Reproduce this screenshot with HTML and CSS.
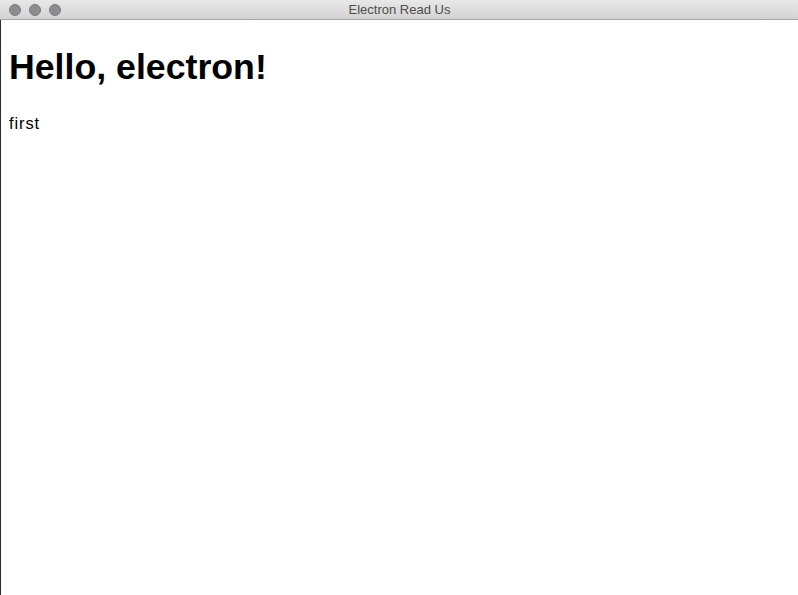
FILE: index.html
```html
<!DOCTYPE html>
<html lang="en">
<head>
<meta charset="utf-8">
<title>Electron Read Us</title>
<link rel="stylesheet" href="styles.css">
</head>
<body>
  <div class="window">
    <div class="titlebar">
      <div class="lights">
        <span class="light"></span>
        <span class="light"></span>
        <span class="light"></span>
      </div>
      <div class="title">Electron Read Us</div>
    </div>
    <div class="content">
      <h1 class="heading">Hello, electron!</h1>
      <p class="text">first</p>
    </div>
  </div>
</body>
</html>
```

FILE: styles.css
```css
html, body {
  margin: 0;
  padding: 0;
  height: 100%;
  background: #ffffff;
}

.window {
  display: flex;
  flex-direction: column;
  height: 100%;
  box-sizing: border-box;
  font-family: "Liberation Sans", Arial, sans-serif;
}

.titlebar {
  position: relative;
  flex: 0 0 19px;
  display: flex;
  align-items: center;
  background: linear-gradient(#e8e8e8, #d3d3d3);
  border-bottom: 1px solid #a9a9a9;
}

.lights {
  display: flex;
  gap: 8px;
  padding-left: 9px;
}

.light {
  width: 12px;
  height: 12px;
  border-radius: 50%;
  background: #8d8c8f;
  box-sizing: border-box;
  border: 1px solid #7b7a7d;
}

.title {
  position: absolute;
  left: 1px;
  right: 0;
  top: 0;
  line-height: 19px;
  text-align: center;
  font-size: 13px;
  color: #4d4d4d;
  pointer-events: none;
}

.content {
  flex: 1;
  border-left: 1px solid #2b2b2b;
  padding: 0 8px;
  color: #000000;
}

.heading {
  margin: 28px 0 0;
  font-size: 35.7px;
  font-weight: bold;
  line-height: 39px;
}

.text {
  margin: 27px 0 0;
  font-size: 16.5px;
  letter-spacing: 0.9px;
  line-height: 19px;
}
```
